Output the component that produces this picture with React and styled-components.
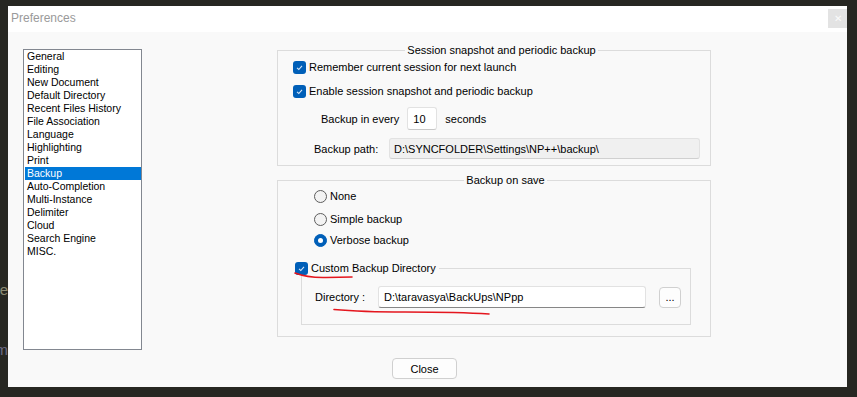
import styled, { createGlobalStyle } from "styled-components";

const GlobalStyle = createGlobalStyle`
  html, body {
    margin: 0;
    background: #272722;
  }
  body {
    font-family: "Liberation Sans", Arial, sans-serif;
    color: #000;
  }
`;

const Page = styled.div`
  position: relative;
  width: 857px;
  height: 397px;
  display: flex;
  overflow: hidden;
`;

const Backdrop = styled.div`
  width: 8px;
  flex-shrink: 0;
  overflow: hidden;
  display: flex;
  flex-direction: column;
  align-items: flex-end;
`;

const Ghost = styled.div`
  margin-top: ${(p) => p.$top}px;
  font-size: 15px;
  line-height: 16px;
  color: ${(p) => p.$color};
  white-space: nowrap;
`;

const Dialog = styled.div`
  margin-top: 6px;
  width: 839px;
  height: 381px;
  background: #f9f9f9;
  display: flex;
  flex-direction: column;
`;

const TitleBar = styled.div`
  height: 26px;
  background: #fff;
  display: flex;
  justify-content: space-between;
  align-items: flex-start;
`;

const Title = styled.div`
  padding-left: 3px;
  line-height: 25px;
  font-size: 12px;
  color: #9a9a9a;
`;

const CloseX = styled.div`
  width: 19px;
  height: 19px;
  margin-top: 3px;
  background: #e3e3e3;
  color: #fafafa;
  font-size: 10px;
  display: flex;
  align-items: center;
  justify-content: center;
`;

const Body = styled.div`
  display: flex;
  align-items: flex-start;
  padding: 17px 0 0 15px;
`;

const List = styled.div`
  box-sizing: border-box;
  width: 119px;
  height: 301px;
  background: #fff;
  border: 1px solid #828790;
  padding-left: 1px;
`;

const Item = styled.div`
  height: 13px;
  line-height: 13px;
  font-size: 10.5px;
  padding-left: 2px;
  white-space: nowrap;
  background: ${(p) => (p.$active ? "#0078d7" : "transparent")};
  color: ${(p) => (p.$active ? "#fff" : "#000")};
`;

const Panel = styled.div`
  margin-left: 135px;
  margin-top: -6px;
  width: 434px;
  display: flex;
  flex-direction: column;
`;

const Group = styled.fieldset`
  margin: ${(p) => p.$margin || "0"};
  padding: ${(p) => p.$pad};
  border: 1px solid #dcdcdc;
  min-width: 0;
  display: flex;
  flex-direction: column;
`;

const Legend = styled.legend`
  margin: 0 auto;
  padding: 0 2px;
  font-size: 11px;
  line-height: 14px;
  height: 14px;
`;

const SubLegend = styled.legend`
  margin-left: -20px;
  padding: 0 3px 0 0;
  font-size: 11px;
  line-height: 14px;
  height: 14px;
  display: flex;
  align-items: center;
  gap: 3px;
`;

const Row = styled.div`
  display: flex;
  align-items: center;
  height: ${(p) => p.$h || 16}px;
  margin-top: ${(p) => p.$mt || 0}px;
  padding-left: ${(p) => p.$pl || 0}px;
  gap: ${(p) => p.$gap || 3}px;
  font-size: 11px;
  white-space: nowrap;
`;

const Label = styled.span`
  width: ${(p) => (p.$w ? `${p.$w}px` : "auto")};
  flex-shrink: 0;
`;

const Box = styled.span`
  width: 13px;
  height: 13px;
  border-radius: 3px;
  background: #005fb8;
  display: flex;
  align-items: center;
  justify-content: center;
  flex-shrink: 0;
`;

const Radio = styled.span`
  box-sizing: border-box;
  width: 13px;
  height: 13px;
  border-radius: 50%;
  flex-shrink: 0;
  border: 1px solid ${(p) => (p.$on ? "#005fb8" : "#5d5d5d")};
  background: ${(p) => (p.$on ? "#005fb8" : "#f3f3f3")};
  display: flex;
  align-items: center;
  justify-content: center;
  &::after {
    content: "";
    display: ${(p) => (p.$on ? "block" : "none")};
    width: 5px;
    height: 5px;
    border-radius: 50%;
    background: #fff;
  }
`;

const Input = styled.div`
  box-sizing: border-box;
  width: ${(p) => p.$w}px;
  height: ${(p) => p.$h}px;
  padding-left: ${(p) => p.$pl || 4}px;
  background: ${(p) => p.$bg || "#fff"};
  border: 1px solid #e2e2e2;
  border-bottom-color: ${(p) => p.$under || "#c8c8c8"};
  border-radius: 3px;
  display: flex;
  align-items: center;
  font-size: 11px;
  flex-shrink: 0;
`;

const Button = styled.div`
  box-sizing: border-box;
  width: ${(p) => p.$w}px;
  height: 21px;
  margin-left: ${(p) => p.$ml || 0}px;
  background: #fdfdfd;
  border: 1px solid #d0d0d0;
  border-radius: 4px;
  display: flex;
  align-items: center;
  justify-content: center;
  font-size: 11px;
  flex-shrink: 0;
`;

const Footer = styled.div`
  display: flex;
  justify-content: center;
  margin-top: 8px;
  padding-right: 6px;
`;

const Marks = styled.svg`
  position: absolute;
  left: 0;
  top: 0;
  pointer-events: none;
`;

const Check = () => (
  <Box>
    <svg width="9" height="9" viewBox="0 0 9 9">
      <polyline points="2,4.8 3.8,6.5 7,2.8" fill="none" stroke="#d6e6f7" strokeWidth="1.1" />
    </svg>
  </Box>
);

const pages = [
  "General",
  "Editing",
  "New Document",
  "Default Directory",
  "Recent Files History",
  "File Association",
  "Language",
  "Highlighting",
  "Print",
  "Backup",
  "Auto-Completion",
  "Multi-Instance",
  "Delimiter",
  "Cloud",
  "Search Engine",
  "MISC.",
];

export default function App() {
  return (
    <>
      <GlobalStyle />
      <Page>
        <Backdrop>
          <Ghost $top={282} $color="#8b8a72">
            e
          </Ghost>
          <Ghost $top={44} $color="#6d6b86">
            m
          </Ghost>
        </Backdrop>
        <Dialog>
          <TitleBar>
            <Title>Preferences</Title>
            <CloseX>✕</CloseX>
          </TitleBar>
          <Body>
            <List>
              {pages.map((p) => (
                <Item key={p} $active={p === "Backup"}>
                  {p}
                </Item>
              ))}
            </List>
            <Panel>
              <Group $pad="1px 0 6px 15px">
                <Legend>Session snapshot and periodic backup</Legend>
                <Row $mt={1}>
                  <Check />
                  <span>Remember current session for next launch</span>
                </Row>
                <Row $mt={8}>
                  <Check />
                  <span>Enable session snapshot and periodic backup</span>
                </Row>
                <Row $mt={8} $h={23} $pl={28} $gap={8}>
                  <Label>Backup in every</Label>
                  <Input $w={30} $h={23} $pl={5}>
                    10
                  </Input>
                  <Label>seconds</Label>
                </Row>
                <Row $mt={8} $h={21} $pl={21} $gap={0}>
                  <Label $w={72}>Backup path:</Label>
                  <Input $w={311} $h={21} $bg="#f0f0f0" $under="#d0d0d0">
                    {"D:\\SYNCFOLDER\\Settings\\NP++\\backup\\"}
                  </Input>
                </Row>
              </Group>
              <Group $margin="7px 0 0 0" $pad="0 0 11px 23px">
                <Legend>Backup on save</Legend>
                <Row $mt={1} $pl={13}>
                  <Radio />
                  <span>None</span>
                </Row>
                <Row $mt={7} $pl={13}>
                  <Radio />
                  <span>Simple backup</span>
                </Row>
                <Row $mt={5} $pl={13}>
                  <Radio $on />
                  <span>Verbose backup</span>
                </Row>
                <Group $margin="13px 19px 0 0" $pad="0 0 16px 13px">
                  <SubLegend>
                    <Check />
                    <span>Custom Backup Directory</span>
                  </SubLegend>
                  <Row $mt={11} $h={22} $gap={0}>
                    <Label $w={60}>Directory :</Label>
                    <Input $w={268} $h={22} $pl={5} $under="#868686">
                      {"D:\\taravasya\\BackUps\\NPpp"}
                    </Input>
                    <Button $w={22} $ml={10}>
                      ...
                    </Button>
                  </Row>
                </Group>
              </Group>
            </Panel>
          </Body>
          <Footer>
            <Button $w={65}>Close</Button>
          </Footer>
        </Dialog>
        <Marks width="857" height="397" viewBox="0 0 857 397">
          <path d="M295 273 Q308 278 326 277.5 L352 277" fill="none" stroke="#e4161e" strokeWidth="1.6" strokeLinecap="round" />
          <path d="M334 309.5 Q362 312 405 312 Q460 312 489 314" fill="none" stroke="#e4161e" strokeWidth="1.6" strokeLinecap="round" />
        </Marks>
      </Page>
    </>
  );
}
